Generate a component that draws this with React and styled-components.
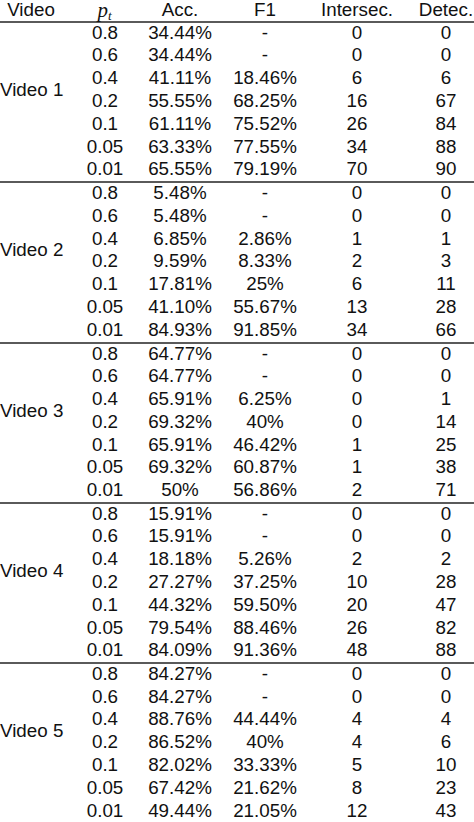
import React from "react";
import styled, { createGlobalStyle } from "styled-components";

const GlobalStyle = createGlobalStyle`
  html, body {
    margin: 0;
    padding: 0;
    background: #ffffff;
  }
`;

const videos = [
  {
    name: "Video 1",
    rows: [
      ["0.8", "34.44%", "-", "0", "0"],
      ["0.6", "34.44%", "-", "0", "0"],
      ["0.4", "41.11%", "18.46%", "6", "6"],
      ["0.2", "55.55%", "68.25%", "16", "67"],
      ["0.1", "61.11%", "75.52%", "26", "84"],
      ["0.05", "63.33%", "77.55%", "34", "88"],
      ["0.01", "65.55%", "79.19%", "70", "90"],
    ],
  },
  {
    name: "Video 2",
    rows: [
      ["0.8", "5.48%", "-", "0", "0"],
      ["0.6", "5.48%", "-", "0", "0"],
      ["0.4", "6.85%", "2.86%", "1", "1"],
      ["0.2", "9.59%", "8.33%", "2", "3"],
      ["0.1", "17.81%", "25%", "6", "11"],
      ["0.05", "41.10%", "55.67%", "13", "28"],
      ["0.01", "84.93%", "91.85%", "34", "66"],
    ],
  },
  {
    name: "Video 3",
    rows: [
      ["0.8", "64.77%", "-", "0", "0"],
      ["0.6", "64.77%", "-", "0", "0"],
      ["0.4", "65.91%", "6.25%", "0", "1"],
      ["0.2", "69.32%", "40%", "0", "14"],
      ["0.1", "65.91%", "46.42%", "1", "25"],
      ["0.05", "69.32%", "60.87%", "1", "38"],
      ["0.01", "50%", "56.86%", "2", "71"],
    ],
  },
  {
    name: "Video 4",
    rows: [
      ["0.8", "15.91%", "-", "0", "0"],
      ["0.6", "15.91%", "-", "0", "0"],
      ["0.4", "18.18%", "5.26%", "2", "2"],
      ["0.2", "27.27%", "37.25%", "10", "28"],
      ["0.1", "44.32%", "59.50%", "20", "47"],
      ["0.05", "79.54%", "88.46%", "26", "82"],
      ["0.01", "84.09%", "91.36%", "48", "88"],
    ],
  },
  {
    name: "Video 5",
    rows: [
      ["0.8", "84.27%", "-", "0", "0"],
      ["0.6", "84.27%", "-", "0", "0"],
      ["0.4", "88.76%", "44.44%", "4", "4"],
      ["0.2", "86.52%", "40%", "4", "6"],
      ["0.1", "82.02%", "33.33%", "5", "10"],
      ["0.05", "67.42%", "21.62%", "8", "23"],
      ["0.01", "49.44%", "21.05%", "12", "43"],
    ],
  },
];

const Page = styled.div`
  width: 474px;
  height: 822px;
  overflow: hidden;
  background: #fff;
`;

const Table = styled.table`
  width: 474px;
  border-collapse: collapse;
  table-layout: fixed;
  font-family: "Liberation Sans", Arial, sans-serif;
  font-size: 18.8px;
  color: #111;
`;

const HeadRow = styled.tr`
  height: 21px;
  border-bottom: 2px solid #5a5a5a;
`;

const HeadCell = styled.th`
  font-weight: normal;
  text-align: center;
  white-space: nowrap;
  height: 20px;
  padding: 0 0 1px ${(p) => (p.last ? "22px" : "0")};
  line-height: 18px;
  vertical-align: middle;
`;

const Row = styled.tr`
  height: 22.86px;
  border-top: ${(p) => (p.first ? "2px solid #5a5a5a" : "none")};
`;

const Cell = styled.td`
  text-align: center;
  white-space: nowrap;
  padding: 0 0 3px ${(p) => (p.last ? "22px" : "0")};
  line-height: 19px;
  vertical-align: middle;
`;

const Label = styled(Cell)`
  text-align: left;
`;

const Math = styled.span`
  display: inline-block;
  font-family: "Liberation Serif", "Times New Roman", serif;
  font-style: italic;
  font-size: 21px;
  line-height: 24px;
  margin: -3px 0;
  vertical-align: top;
  padding-right: 1px;
  sub {
    font-size: 13px;
    line-height: 0;
    vertical-align: -3px;
  }
`;

const widths = [62, 86, 64, 106, 78, 78];

export default function App() {
  return (
    <Page>
      <GlobalStyle />
      <Table>
        <colgroup>
          {widths.map((w, i) => (
            <col key={i} style={{ width: w }} />
          ))}
        </colgroup>
        <thead>
          <HeadRow>
            <HeadCell>Video</HeadCell>
            <HeadCell>
              <Math>
                p<sub>t</sub>
              </Math>
            </HeadCell>
            <HeadCell>Acc.</HeadCell>
            <HeadCell>F1</HeadCell>
            <HeadCell>Intersec.</HeadCell>
            <HeadCell last>Detec.</HeadCell>
          </HeadRow>
        </thead>
        {videos.map((v, vi) => (
          <tbody key={v.name}>
            {v.rows.map((r, ri) => (
              <Row key={ri} first={vi > 0 && ri === 0}>
                {ri === 0 && <Label rowSpan={6}>{v.name}</Label>}
                {ri === 6 && <Cell />}
                {r.map((c, ci) => (
                  <Cell key={ci} last={ci === r.length - 1}>
                    {c}
                  </Cell>
                ))}
              </Row>
            ))}
          </tbody>
        ))}
      </Table>
    </Page>
  );
}
